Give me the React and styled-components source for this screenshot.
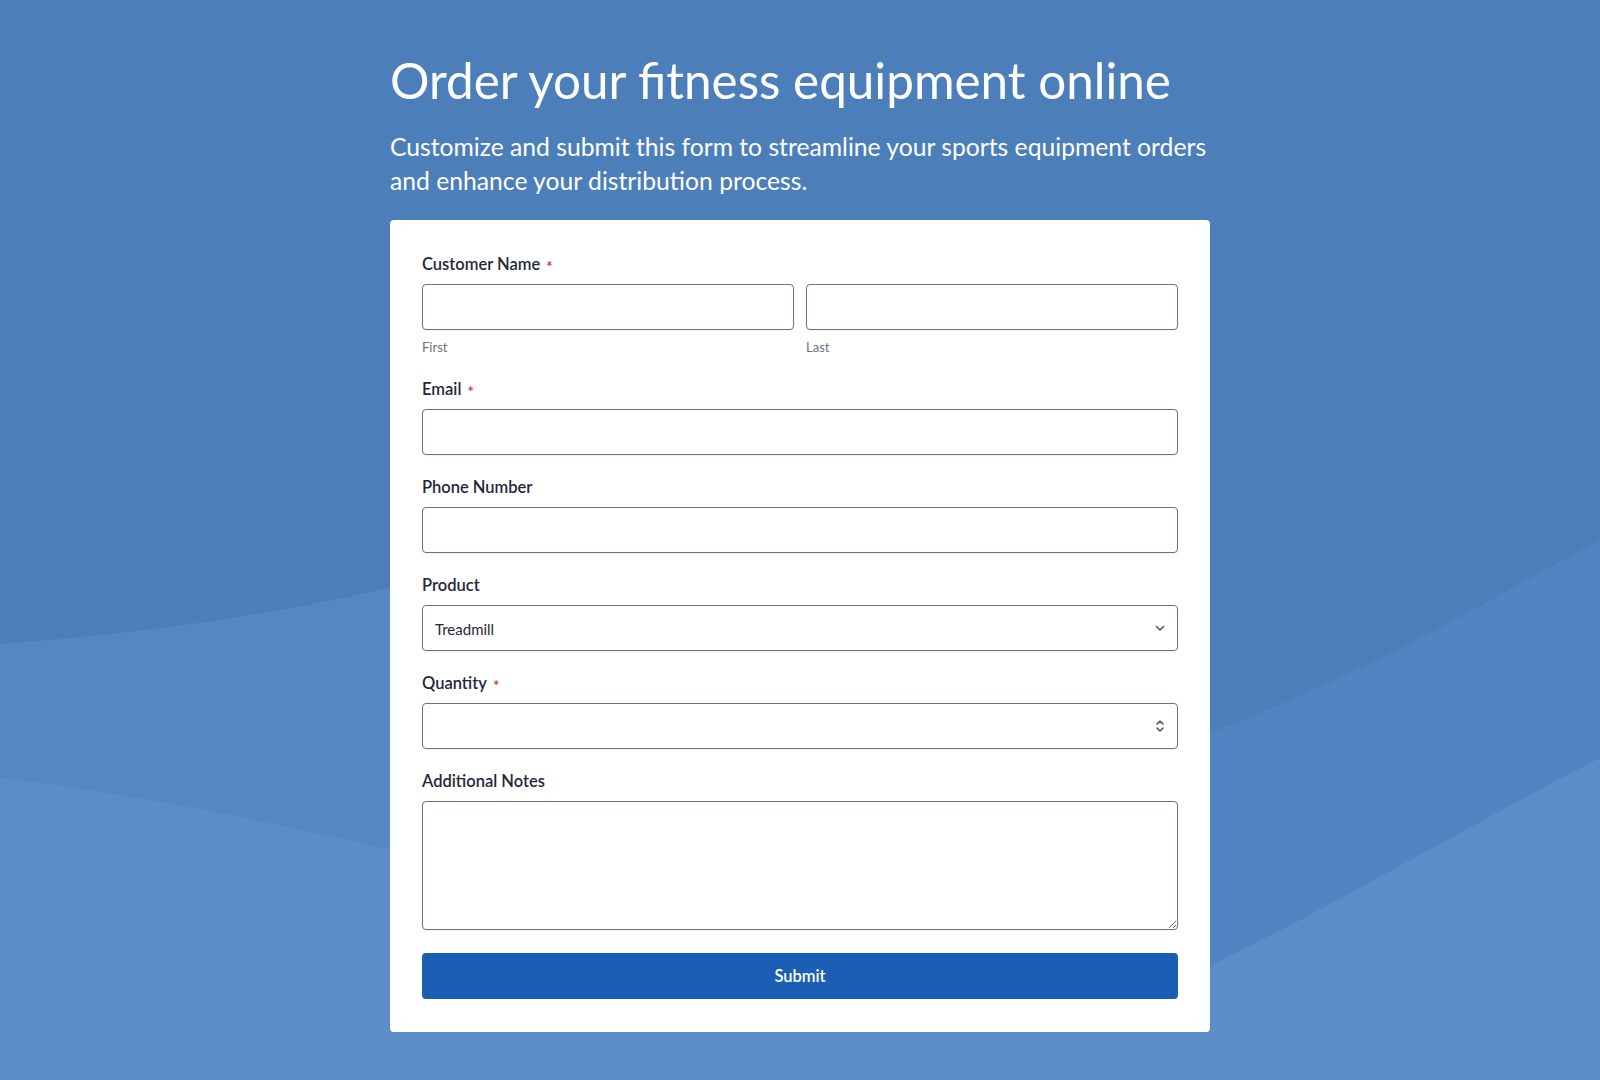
import React from 'react'
import styled, { createGlobalStyle } from 'styled-components'

const GlobalStyle = createGlobalStyle`
  * {
    box-sizing: border-box;
  }

  body {
    margin: 0;
    font-family: Lato, 'Noto Sans', sans-serif;
    background-color: #4c7fba;
  }
`

const Page = styled.div`
  position: relative;
  min-height: 100vh;
  overflow: hidden;
  padding: 51px 0 48px;
`

const Backdrop = styled.svg`
  position: absolute;
  inset: 0;
  width: 100%;
  height: 100%;
  z-index: 0;
`

const Container = styled.main`
  position: relative;
  z-index: 1;
  width: 820px;
  margin: 0 auto;
`

const Title = styled.h1`
  margin: 0;
  font-size: 49.4px;
  line-height: 58px;
  font-weight: 400;
  color: #ffffff;
`

const Lead = styled.p`
  margin: 21px 0 22px;
  font-size: 24.7px;
  line-height: 34px;
  color: #ffffff;
`

const Card = styled.form`
  display: flex;
  flex-direction: column;
  background: #ffffff;
  border-radius: 4px;
  padding: 34px 32px 33px;
`

const Group = styled.div`
  display: flex;
  flex-direction: column;
  margin-bottom: ${(p) => p.$gap || 22}px;
`

const Label = styled.label`
  display: flex;
  align-items: center;
  gap: 6px;
  font-size: 16.5px;
  line-height: 20px;
  font-weight: 600;
  color: #1e293b;
  margin-bottom: 10px;
`

const Required = styled.span`
  color: #dc2626;
  font-size: 15px;
  line-height: 1;
  transform: translateY(2px);
`

const NameRow = styled.div`
  display: grid;
  grid-template-columns: 1fr 1fr;
  gap: 12px;
`

const Column = styled.div`
  display: flex;
  flex-direction: column;
`

const Hint = styled.span`
  margin-top: 8px;
  font-size: 13px;
  line-height: 18px;
  color: #6b7280;
`

const fieldBase = `
  width: 100%;
  border: 1px solid #6b7280;
  border-radius: 4px;
  background: #ffffff;
  font-family: Lato, 'Noto Sans', sans-serif;
  font-size: 15px;
  color: #1f2937;
  box-shadow: 0 1px 2px rgba(15, 23, 42, 0.06);
  outline: none;
`

const Input = styled.input`
  ${fieldBase}
  height: 46px;
  padding: 0 13px;

  &::-webkit-inner-spin-button,
  &::-webkit-outer-spin-button {
    -webkit-appearance: none;
    margin: 0;
  }
  -moz-appearance: textfield;
`

const FieldWrap = styled.div`
  position: relative;
`

const Select = styled.select`
  ${fieldBase}
  height: 46px;
  padding: 2px 36px 0 12px;
  appearance: none;
  -webkit-appearance: none;
`

const Indicator = styled.span`
  position: absolute;
  right: 12px;
  top: 50%;
  transform: translateY(-50%);
  display: flex;
  pointer-events: none;
  color: #4b5563;
`

const TextArea = styled.textarea`
  ${fieldBase}
  height: 129px;
  padding: 10px 13px;
  resize: vertical;
  display: block;
`

const Submit = styled.button`
  height: 46px;
  border: none;
  border-radius: 4px;
  background-color: #1a5fb4;
  color: #ffffff;
  font-family: Lato, 'Noto Sans', sans-serif;
  font-size: 16.5px;
  font-weight: 600;
  cursor: pointer;
`

function ChevronDown() {
  return (
    <svg width="12" height="12" viewBox="0 0 12 12" fill="none">
      <path d="M2.5 4.5 6 8l3.5-3.5" stroke="currentColor" strokeWidth="1.6" strokeLinecap="round" strokeLinejoin="round" />
    </svg>
  )
}

function ChevronUpDown() {
  return (
    <svg width="12" height="18" viewBox="0 0 12 18" fill="none">
      <path d="M3 7 6 4l3 3" stroke="currentColor" strokeWidth="1.6" strokeLinecap="round" strokeLinejoin="round" />
      <path d="M3 11l3 3 3-3" stroke="currentColor" strokeWidth="1.6" strokeLinecap="round" strokeLinejoin="round" />
    </svg>
  )
}

function Waves() {
  return (
    <Backdrop viewBox="0 0 1600 1080" preserveAspectRatio="none">
      <rect width="1600" height="1080" fill="#4c7fba" />
      <path d="M0 644 C 250 625 420 590 700 500 L 1000 400 L 1000 1080 L 0 1080 Z" fill="#5587c3" />
      <path d="M1000 800 C 1300 720 1450 620 1600 540 L 1600 1080 L 1000 1080 Z" fill="#5185c1" />
      <path d="M0 778 C 180 800 330 835 520 880 C 700 925 900 1000 1000 1080 L 0 1080 Z" fill="#5b8dc9" />
      <path d="M1000 1060 C 1250 960 1420 850 1600 758 L 1600 1080 L 1000 1080 Z" fill="#5b8dc9" />
      <path d="M300 1080 L 300 1010 L 1300 1010 L 1300 1080 Z" fill="#5b8dc9" />
    </Backdrop>
  )
}

export default function App() {
  return (
    <>
      <GlobalStyle />
      <Page>
        <Waves />
        <Container>
          <Title>Order your fitness equipment online</Title>
          <Lead>
            Customize and submit this form to streamline your sports equipment orders and enhance your
            distribution process.
          </Lead>
          <Card onSubmit={(e) => e.preventDefault()}>
            <Group $gap={23}>
              <Label>
                Customer Name <Required>*</Required>
              </Label>
              <NameRow>
                <Column>
                  <Input type="text" aria-label="First" />
                  <Hint>First</Hint>
                </Column>
                <Column>
                  <Input type="text" aria-label="Last" />
                  <Hint>Last</Hint>
                </Column>
              </NameRow>
            </Group>

            <Group>
              <Label htmlFor="email">
                Email <Required>*</Required>
              </Label>
              <Input id="email" type="email" />
            </Group>

            <Group>
              <Label htmlFor="phone">Phone Number</Label>
              <Input id="phone" type="tel" />
            </Group>

            <Group>
              <Label htmlFor="product">Product</Label>
              <FieldWrap>
                <Select id="product" defaultValue="Treadmill">
                  <option>Treadmill</option>
                  <option>Exercise Bike</option>
                  <option>Rowing Machine</option>
                  <option>Dumbbell Set</option>
                </Select>
                <Indicator>
                  <ChevronDown />
                </Indicator>
              </FieldWrap>
            </Group>

            <Group>
              <Label htmlFor="quantity">
                Quantity <Required>*</Required>
              </Label>
              <FieldWrap>
                <Input id="quantity" type="number" />
                <Indicator>
                  <ChevronUpDown />
                </Indicator>
              </FieldWrap>
            </Group>

            <Group $gap={23}>
              <Label htmlFor="notes">Additional Notes</Label>
              <TextArea id="notes" />
            </Group>

            <Submit type="submit">Submit</Submit>
          </Card>
        </Container>
      </Page>
    </>
  )
}
